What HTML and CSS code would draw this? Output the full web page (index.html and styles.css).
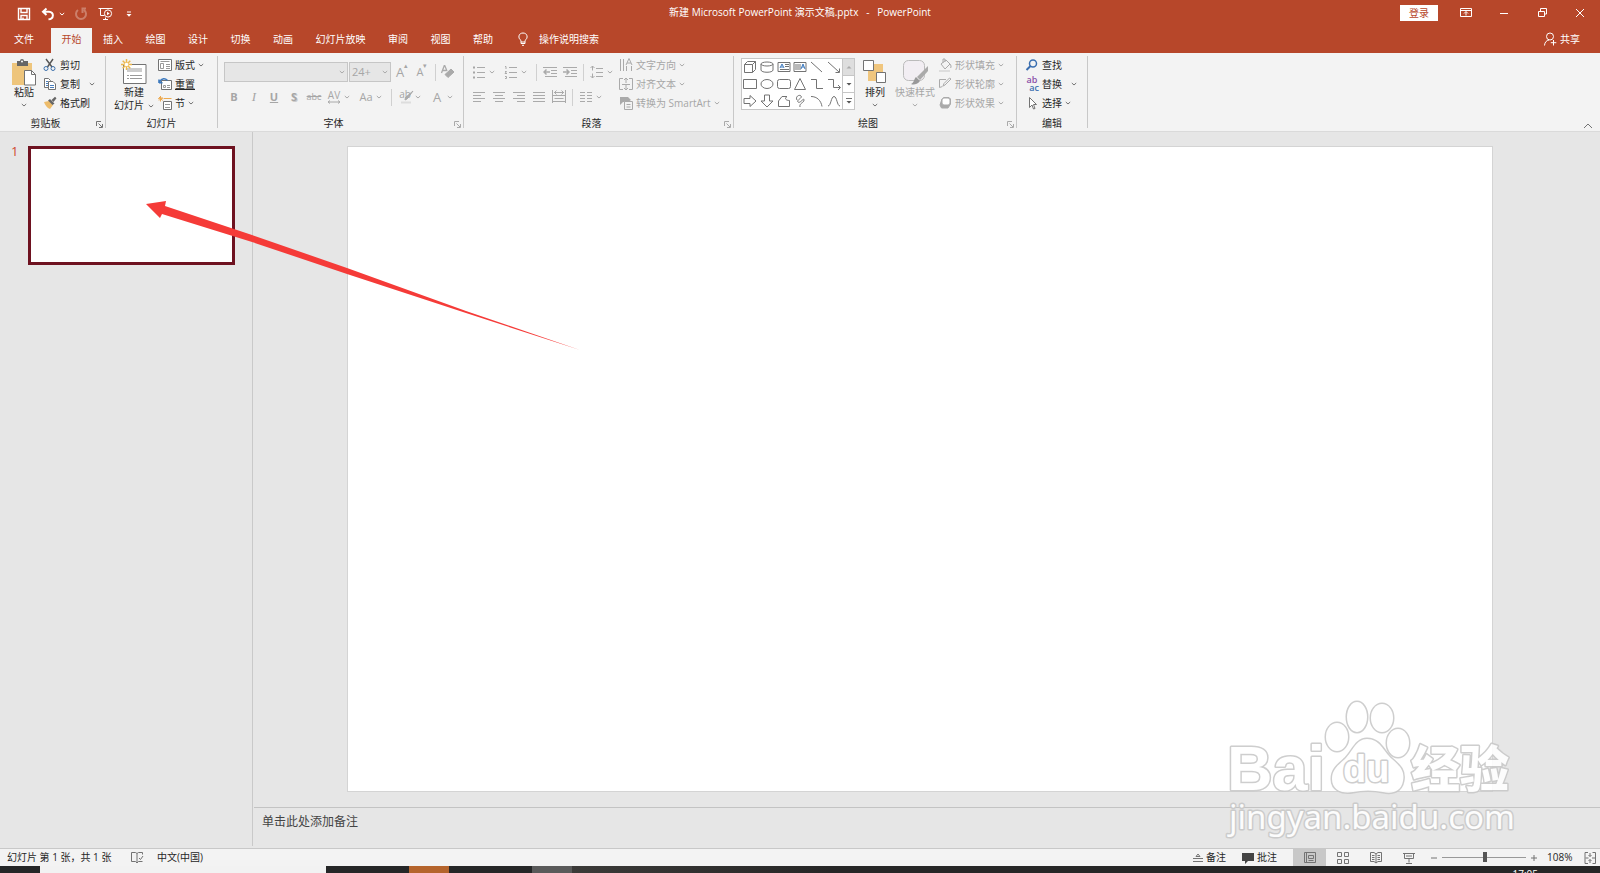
FILE: index.html
```html
<!DOCTYPE html>
<html lang="zh-CN">
<head>
<meta charset="utf-8">
<title>新建 Microsoft PowerPoint 演示文稿.pptx - PowerPoint</title>
<link rel="stylesheet" href="styles.css">
</head>
<body>
<svg class="defs" aria-hidden="true">
  <symbol id="chev" viewBox="0 0 6 6"><path d="M.8 2l2.2 2 2.2-2"/></symbol>
  <symbol id="launch" viewBox="0 0 7 7"><path d="M.5 5V.5H5M2.5 2.5l3.5 3.5M6.500 3v3.500H3"/></symbol>
</svg>
<div class="app">
  <header class="titlebar">
    <div class="quick">
      <button class="tbtn save" aria-label="保存"><svg class="i14" viewBox="0 0 14 14"><path d="M1.500 1.500h11v11h-11zM4 1.500v4h6v-4M4 12.500V8.500h6v4M6 10.500v2" stroke-width="1.400"/></svg></button>
      <button class="tbtn" aria-label="撤消"><svg class="i14 bold" viewBox="0 0 14 14"><path d="M5.500 1.500L2 4.800l3.500 3.300M2.300 4.800h5.700c5.500 0 5 7.500-.5 7.500"/></svg></button>
      <button class="drop" aria-label="撤消选项"><svg class="chev"><use href="#chev"/></svg></button>
      <button class="tbtn faded" aria-label="恢复" disabled><svg class="i14 bold" viewBox="0 0 14 14"><path d="M4 3a5 5 0 1 0 6 0M7.500 1.500H12M8.500 1.500V6"/></svg></button>
      <button class="tbtn show" aria-label="从头开始"><svg class="i16" viewBox="0 0 16 16"><path d="M.5 2.500h14M2.500 2.500v7h4M5 13.500h5M7.500 11.500v2"/><circle cx="10" cy="7.500" r="3.600"/><path d="M9 5.800v3.400l2.700-1.700z" class="solid"/></svg></button>
      <button class="drop" aria-label="自定义快速访问工具栏"><svg class="chev" viewBox="0 0 6 6"><path d="M1 1h4"/><path d="M.5 3h5L3 5.800z" class="solid"/></svg></button>
    </div>
    <h1 class="doc-title">新建 Microsoft PowerPoint 演示文稿.pptx &nbsp;&nbsp;-&nbsp;&nbsp; PowerPoint</h1>
    <div class="window">
      <button class="login">登录</button>
      <button class="wbtn" aria-label="功能区显示选项"><svg class="i14" viewBox="0 0 14 14"><path d="M1.500 2.500h11v8h-11zM1.500 4.500h11M7 9.500V5.800M5 7.500l2-2 2 2"/></svg></button>
      <button class="wbtn" aria-label="最小化"><svg class="i14" viewBox="0 0 14 14"><path d="M3 7.500h8"/></svg></button>
      <button class="wbtn" aria-label="还原"><svg class="i14" viewBox="0 0 14 14"><path d="M3.500 5.500h6v5h-6zM5.500 5.500v-3h6v5.500h-2"/></svg></button>
      <button class="wbtn" aria-label="关闭"><svg class="i14" viewBox="0 0 14 14"><path d="M3 3l8 8M11 3l-8 8"/></svg></button>
    </div>
  </header>

  <nav class="tabs">
    <button class="tab file">文件</button>
    <button class="tab active">开始</button>
    <div class="tab-list">
      <button class="tab">插入</button><button class="tab">绘图</button><button class="tab">设计</button><button class="tab">切换</button><button class="tab">动画</button><button class="tab">幻灯片放映</button><button class="tab">审阅</button><button class="tab">视图</button><button class="tab">帮助</button>
    </div>
    <button class="tab tell"><svg class="i14" viewBox="0 0 14 14"><path d="M5 10V8.500C1.500 6 2.500 1 7 1s5.500 5 2 7.500V10zM5 10v1.500h4V10M6 13.300h2"/></svg>操作说明搜索</button>
    <button class="tab share"><svg class="i14" viewBox="0 0 14 14"><circle cx="7" cy="4.500" r="3.500"/><path d="M1.500 13.500c.3-3.500 2-5 4.500-5.500M10.500 8v5.500M7.800 10.700h5.500"/></svg>共享</button>
  </nav>

  <section class="ribbon" aria-label="开始">
    <div class="group clipboard">
      <div class="group-body">
        <button class="big"><svg class="i28" viewBox="0 0 28 28"><path d="M2 5h20v22H2z" fill="#eec57c" stroke="none"/><path d="M7 3h3a2 2 0 0 1 4 0h4v5H7z" fill="#666" stroke="none"/><circle cx="12" cy="3.500" r="1" fill="#fff" stroke="none"/><path d="M14.500 12.500h7l4 4v10.500h-11z" fill="#fff"/><path d="M21.500 12.500v4h4"/></svg><span>粘贴</span><svg class="chev"><use href="#chev"/></svg></button>
        <div class="col">
          <button class="cmd"><svg class="i14" viewBox="0 0 14 14"><path d="M3 1l6 8M10 1L4.500 9" stroke="#555" stroke-width="1.400"/><circle cx="3" cy="10.500" r="2" stroke="#3f72ad"/><circle cx="10" cy="10.500" r="2" stroke="#3f72ad"/></svg>剪切</button>
          <button class="cmd"><svg class="i14" viewBox="0 0 14 14"><path d="M1.500 1.500h4l2 2v7h-6z" fill="#fff"/><path d="M5.500 4.500h4.500l2.500 2.500v5.500h-7z" fill="#fff"/><path d="M3 4.500h2M3 6.500h2M3 8.500h2M7 8.500h4M7 10.500h4" stroke="#4a7ebb"/></svg>复制<svg class="chev far"><use href="#chev"/></svg></button>
          <button class="cmd"><svg class="i14" viewBox="0 0 14 14"><path d="M1 6l5-1 4 4-3 4C4 12 2 9 1 6z" fill="#edbc6b" stroke="none"/><path d="M5 4.500l2-1.500 4.500 4.500-2 1.500zM8.500 4L12 .8l1.500 1.500L10.500 6z" fill="#666" stroke="none"/></svg>格式刷</button>
        </div>
      </div>
      <div class="label">剪贴板</div>
      <button class="launcher" aria-label="剪贴板设置"><svg><use href="#launch"/></svg></button>
    </div>

    <div class="group slides">
      <div class="group-body">
        <button class="big"><svg class="i28" viewBox="0 0 28 28"><path d="M3.500 6.500h22.500v19H3.500z" fill="#fff"/><path d="M7 10h15v4H7z" fill="#ccc" stroke="none"/><path d="M7 17.500h2M10 17.500h12M7 20.500h2M10 20.500h12" stroke="#999"/><path d="M6.500 1v11M1 6.500h11M2.700 2.700l7.600 7.600M10.300 2.700l-7.600 7.600" stroke="#edb84e" stroke-width="1.500"/><circle cx="6.500" cy="6.500" r="1.800" fill="#fff" stroke="none"/></svg><span>新建</span><span class="with-chev">幻灯片<svg class="chev"><use href="#chev"/></svg></span></button>
        <div class="col">
          <button class="cmd"><svg class="i14" viewBox="0 0 14 14"><path d="M.5 1.500h13v11H.5z" fill="#fff"/><path d="M2.500 3.500h9M2.500 5.500h3v5h-3zM8 6.500h4M8 8.500h4M8 10.500h4" stroke="#999"/></svg>版式<svg class="chev"><use href="#chev"/></svg></button>
          <button class="cmd under"><svg class="i14" viewBox="0 0 14 14"><path d="M3.500 3.500h10v9h-10z" fill="#fff"/><path d="M5.500 8.500h2v2h-2zM9 8.500h3M9 10.500h3" stroke="#999"/><path d="M1 6V2.500M1 5.800h3.500M1.500 5C4 1 7 1 9.500 3.500" stroke="#3b78bd" stroke-width="1.600"/></svg>重置</button>
          <button class="cmd"><svg class="i14" viewBox="0 0 14 14"><path d="M5.500 5.500h8v8h-8z" fill="#fff"/><path d="M7 8.500h5M7 11.500h5" stroke="#999"/><path d="M6 2.500h7.500M2.500 0v5.500M0 2.700h5.500M1 1l3.500 3.500M4.500 1L1 4.500" stroke="#eda94e"/></svg>节<svg class="chev"><use href="#chev"/></svg></button>
        </div>
      </div>
      <div class="label">幻灯片</div>
    </div>

    <div class="group font off">
      <div class="group-body tools">
        <div class="row">
          <span class="combo name"><select aria-label="字体" disabled><option></option></select><svg class="chev"><use href="#chev"/></svg></span>
          <span class="combo size"><select aria-label="字号" disabled><option>24+</option></select><svg class="chev"><use href="#chev"/></svg></span>
          <button class="tool large" disabled>A<sup>▴</sup></button>
          <button class="tool" disabled>A<sup>▾</sup></button>
          <i class="sep"></i>
          <button class="tool eraser" aria-label="清除所有格式" disabled><svg class="i14" viewBox="0 0 14 14"><path d="M1.500 8L4.500 0l2.500 6M2.500 5.500h4" stroke-width="1.300"/><path d="M5 9.500L11 4l3 3L8 12.500z" fill="#aaa"/></svg></button>
        </div>
        <div class="row">
          <button class="tool" disabled><b>B</b></button>
          <button class="tool serif" disabled><em>I</em></button>
          <button class="tool" disabled><b><u>U</u></b></button>
          <button class="tool shadow" disabled><b>S</b></button>
          <button class="tool tiny" disabled><s>abc</s></button>
          <button class="tool kern" disabled>AV<svg viewBox="0 0 14 4"><path d="M1 2h12M3 .5L1 2l2 1.500M11 .5L13 2l-2 1.500"/></svg></button>
          <button class="drop" aria-label="字符间距" disabled><svg class="chev"><use href="#chev"/></svg></button>
          <button class="tool" disabled>Aa</button>
          <button class="drop" aria-label="更改大小写" disabled><svg class="chev"><use href="#chev"/></svg></button>
          <i class="sep"></i>
          <button class="tool kern mark-pen" disabled>ab<svg class="pen" viewBox="0 0 14 14"><path d="M13 1L7 9l-2 1 .5-2.500z" fill="#aaa"/><path d="M1 12.500h10" stroke="#ddd" stroke-width="2"/></svg></button>
          <button class="drop" aria-label="突出显示颜色" disabled><svg class="chev"><use href="#chev"/></svg></button>
          <button class="tool large" disabled>A</button>
          <button class="drop" aria-label="字体颜色" disabled><svg class="chev"><use href="#chev"/></svg></button>
        </div>
      </div>
      <div class="label">字体</div>
      <button class="launcher" aria-label="字体设置"><svg><use href="#launch"/></svg></button>
    </div>

    <div class="group para off">
      <div class="group-body">
        <div class="tools">
          <div class="row">
            <button class="tool" aria-label="项目符号" disabled><svg class="i14" viewBox="0 0 14 14"><path d="M5 2.500h8M5 7.500h8M5 12.500h8"/><path d="M1 1.500h2v2H1zM1 6.500h2v2H1zM1 11.500h2v2H1z" class="solid"/></svg></button>
            <button class="drop" aria-label="项目符号库" disabled><svg class="chev"><use href="#chev"/></svg></button>
            <button class="tool" aria-label="编号" disabled><svg class="i14" viewBox="0 0 14 14"><path d="M5 2.500h8M5 7.500h8M5 12.500h8M1 1.500h1v2.500M1 6.500h1.500l-1.500 2h2M1 11.500h1.500v2H1"/></svg></button>
            <button class="drop" aria-label="编号库" disabled><svg class="chev"><use href="#chev"/></svg></button>
            <i class="sep"></i>
            <button class="tool" aria-label="降低列表级别" disabled><svg class="i14" viewBox="0 0 14 14"><path d="M0 2.500h14M8 5.500h6M8 8.500h6M2 11.500h12"/><path d="M7 7H1.500M3.500 4.500L1 7l2.500 2.500" stroke-width="1.500"/></svg></button>
            <button class="tool" aria-label="提高列表级别" disabled><svg class="i14" viewBox="0 0 14 14"><path d="M0 2.500h14M8 5.500h6M8 8.500h6M2 11.500h12"/><path d="M0 7h5.500M3.500 4.500L6 7 3.500 9.500" stroke-width="1.500"/></svg></button>
            <i class="sep"></i>
            <button class="tool" aria-label="行距" disabled><svg class="i14" viewBox="0 0 14 14"><path d="M6 3.500h7M6 7.500h7M6 11.500h7M2.500 1v4.500M.5 3l2-2 2 2M2.500 8.500V13M.5 11l2 2 2-2"/></svg></button>
            <button class="drop" aria-label="行距选项" disabled><svg class="chev"><use href="#chev"/></svg></button>
          </div>
          <div class="row">
            <button class="tool" aria-label="左对齐" disabled><svg class="i14" viewBox="0 0 14 14"><path d="M1 2.500h12M1 5.500h8M1 8.500h12M1 11.500h8"/></svg></button>
            <button class="tool" aria-label="居中" disabled><svg class="i14" viewBox="0 0 14 14"><path d="M1 2.500h12M3 5.500h8M1 8.500h12M3 11.500h8"/></svg></button>
            <button class="tool" aria-label="右对齐" disabled><svg class="i14" viewBox="0 0 14 14"><path d="M1 2.500h12M5 5.500h8M1 8.500h12M5 11.500h8"/></svg></button>
            <button class="tool" aria-label="两端对齐" disabled><svg class="i14" viewBox="0 0 14 14"><path d="M1 2.500h12M1 5.500h12M1 8.500h12M1 11.500h12"/></svg></button>
            <button class="tool" aria-label="分散对齐" disabled><svg class="i14" viewBox="0 0 14 14"><path d="M.5 0v13M13.500 0v13M.5 5.500h13M2.500 8.500h9M.5 11.500h13M2 2.500h10M4.500 .5L2.500 2.500l2 2M9.500 .5l2 2-2 2"/></svg></button>
            <i class="sep"></i>
            <button class="tool" aria-label="分栏" disabled><svg class="i14" viewBox="0 0 14 14"><path d="M1 2.500h5M8 2.500h5M1 5.500h5M8 5.500h5M1 8.500h5M8 8.500h5M1 11.500h5M8 11.500h5"/></svg></button>
            <button class="drop" aria-label="分栏选项" disabled><svg class="chev"><use href="#chev"/></svg></button>
          </div>
        </div>
        <div class="col">
          <button class="cmd" disabled><svg class="i14" viewBox="0 0 14 14"><path d="M1.500 1v12M4.500 1v12M7.500 8v5M12.500 8v5M7 7l3-6.500L13 7M8 5h4"/></svg>文字方向<svg class="chev"><use href="#chev"/></svg></button>
          <button class="cmd" disabled><svg class="i14" viewBox="0 0 14 14"><path d="M4 1.500H.5v11H4M10 1.500h3.500v11H10M7 1v5M5 3l2-2 2 2M7 8v5M5 11l2 2 2-2M3 7.500h8"/></svg>对齐文本<svg class="chev"><use href="#chev"/></svg></button>
          <button class="cmd" disabled><svg class="i14" viewBox="0 0 14 14"><path d="M1 1h8l3 3-3 2H4L1 9z" fill="#aaa" stroke="none"/><path d="M5.500 5.500h8v8h-8zM7.500 8.500h4M7.500 11h4" fill="#f3f3f3"/></svg>转换为 SmartArt<svg class="chev"><use href="#chev"/></svg></button>
        </div>
      </div>
      <div class="label">段落</div>
      <button class="launcher" aria-label="段落设置"><svg><use href="#launch"/></svg></button>
    </div>

    <div class="group draw">
      <div class="group-body">
        <div class="gallery">
          <div class="shapes">
            <button aria-label="立方体"><svg class="i14" viewBox="0 0 14 14"><path d="M1.500 4.500h8v8h-8zM1.500 4.500l3-3h8l-3 3M12.500 1.500v8l-3 3"/></svg></button>
            <button aria-label="圆柱"><svg class="i14" viewBox="0 0 14 14"><ellipse cx="7" cy="4" rx="6" ry="2"/><path d="M1 4v6c0 3 12 3 12 0V4"/></svg></button>
            <button aria-label="文本框"><svg class="i14" viewBox="0 0 14 14"><path d="M1 2.500h12v9H1zM8 4.500h4M8 6.500h4M3 9.500h9"/><path d="M3 8l2-4 2 4M4 7h2" stroke="#3b78bd"/></svg></button>
            <button aria-label="竖排文本框"><svg class="i14" viewBox="0 0 14 14"><path d="M1 2.500h12v9H1zM3 4v6M5 4v6M7 4v6"/><path d="M8 9l2-5 2 5M9 7h2" stroke="#3b78bd"/></svg></button>
            <button aria-label="直线"><svg class="i14" viewBox="0 0 14 14"><path d="M1 2l11 10"/></svg></button>
            <button aria-label="箭头"><svg class="i14" viewBox="0 0 14 14"><path d="M1 2l11 10M12.500 8.500V12.500H8.500"/></svg></button>
            <button aria-label="矩形"><svg class="i14" viewBox="0 0 14 14"><path d="M.5 2.500h13v9H.5z"/></svg></button>
            <button aria-label="椭圆"><svg class="i14" viewBox="0 0 14 14"><ellipse cx="7" cy="7" rx="6" ry="4.500"/></svg></button>
            <button aria-label="圆角矩形"><svg class="i14" viewBox="0 0 14 14"><rect x=".5" y="2.500" width="13" height="9" rx="2"/></svg></button>
            <button aria-label="三角形"><svg class="i14" viewBox="0 0 14 14"><path d="M7 1.500l5.500 11h-11z"/></svg></button>
            <button aria-label="肘形连接符"><svg class="i14" viewBox="0 0 14 14"><path d="M1 2.500h5.500v9H13"/></svg></button>
            <button aria-label="肘形箭头"><svg class="i14" viewBox="0 0 14 14"><path d="M1 2.500h5.500v8H13M11 8l2.500 2.500L11 13"/></svg></button>
            <button aria-label="右箭头"><svg class="i14" viewBox="0 0 14 14"><path d="M1 4.500h6v-3l6 5.500-6 5.500v-3H1z"/></svg></button>
            <button aria-label="下箭头"><svg class="i14" viewBox="0 0 14 14"><path d="M4.500 1h5v6h3.500l-6 6-6-6h3.500z"/></svg></button>
            <button aria-label="任意多边形"><svg class="i14" viewBox="0 0 14 14"><path d="M1.500 12.500V7L5 2.500h5c-3 2-1 4 2.500 4v6z"/></svg></button>
            <button aria-label="自由曲线"><svg class="i14" viewBox="0 0 14 14"><path d="M4 6C2 3 6 0 8 2s-5 4-3 6 6-5 6-2-5 3-4 7"/></svg></button>
            <button aria-label="弧形"><svg class="i14" viewBox="0 0 14 14"><path d="M1 2.500c6 0 10 4 11 10"/></svg></button>
            <button aria-label="曲线"><svg class="i14" viewBox="0 0 14 14"><path d="M1 12C4 12 4 2.500 7 2.500S10 12 13 12"/></svg></button>
          </div>
          <div class="scroller">
            <button class="dim" aria-label="上一行"><svg class="chev" viewBox="0 0 6 6"><path d="M.5 4.500h5L3 2z" class="solid"/></svg></button>
            <button aria-label="下一行"><svg class="chev" viewBox="0 0 6 6"><path d="M.5 2h5L3 4.500z" class="solid"/></svg></button>
            <button aria-label="其他"><svg class="chev" viewBox="0 0 6 6"><path d="M0 .5h6"/><path d="M.5 3h5L3 5.500z" class="solid"/></svg></button>
          </div>
        </div>
        <button class="big arrange"><svg class="i28" viewBox="0 0 28 28"><path d="M7 6h15v17H7z" fill="#f0c67e" stroke="none"/><path d="M2.500 2.500h10v10h-10zM15.500 14.500h9v10h-9z" fill="#fff"/></svg><span>排列</span><svg class="chev"><use href="#chev"/></svg></button>
        <button class="big quickstyle" disabled><svg class="i28" viewBox="0 0 28 28"><rect x="2.500" y="2.500" width="21" height="20" rx="5" fill="#f2eef3" stroke="#bbb"/><path d="M27 8v5l-8 9-3-3z" fill="#aaa" stroke="none"/><path d="M15 19l4 4c-3 4-7 4-9 3 3-1 3-5 5-7z" fill="#999" stroke="none"/></svg><span>快速样式</span><svg class="chev"><use href="#chev"/></svg></button>
        <div class="col off">
          <button class="cmd" disabled><svg class="i14" viewBox="0 0 14 14"><path d="M3 6l5-4 4 4-5 5zM5 5V1h2v3M12 6c1 1 1.500 3 .5 4"/><path d="M1 13h11" stroke="#ddd" stroke-width="2"/></svg>形状填充<svg class="chev"><use href="#chev"/></svg></button>
          <button class="cmd" disabled><svg class="i14" viewBox="0 0 14 14"><path d="M8 2.500H1.500v8l3-1M13 2L7 8l-2 1 1-2.500L11.500 1z"/></svg>形状轮廓<svg class="chev"><use href="#chev"/></svg></button>
          <button class="cmd" disabled><svg class="i14" viewBox="0 0 14 14"><path d="M2 9l2-6 2-1.500h5L12.500 3v5L10 12H3.500z" fill="#aaa"/><rect x="4" y="2" width="8" height="7" rx="2" fill="#fff"/></svg>形状效果<svg class="chev"><use href="#chev"/></svg></button>
        </div>
      </div>
      <div class="label">绘图</div>
      <button class="launcher pale" aria-label="绘图设置"><svg><use href="#launch"/></svg></button>
    </div>

    <div class="group edit">
      <div class="group-body">
        <div class="col">
          <button class="cmd"><svg class="i14" viewBox="0 0 14 14"><circle cx="8" cy="5.500" r="3.500" stroke="#3b6fb0" stroke-width="1.500"/><path d="M5.500 8L1.500 12" stroke="#3b6fb0" stroke-width="2"/></svg>查找</button>
          <button class="cmd"><span class="abac"><b>ab</b><b>ac</b></span>替换<svg class="chev far"><use href="#chev"/></svg></button>
          <button class="cmd"><svg class="i14" viewBox="0 0 14 14"><path d="M4.500 1.500v10l2.500-2.500 1.500 4 1.500-.5-1.500-4h3z" fill="#fff"/></svg>选择<svg class="chev"><use href="#chev"/></svg></button>
        </div>
      </div>
      <div class="label">编辑</div>
    </div>
    <button class="collapse" aria-label="折叠功能区"><svg viewBox="0 0 10 6"><path d="M1 5l4-4 4 4"/></svg></button>
  </section>

  <main class="work">
    <aside class="thumbs">
      <span class="num">1</span>
      <button class="thumb" aria-label="幻灯片 1"></button>
    </aside>
    <section class="editor">
      <div class="stage"><div class="slide"></div></div>
      <div class="notes">单击此处添加备注</div>
    </section>
    <svg class="arrow" viewBox="0 0 434 150" aria-hidden="true"><path d="M0 4l20-3-1 5 87 29 95 33 119 43 114 39-114-37-119-39-95-32-90-28-2 4z"/></svg>
  </main>

  <footer class="status">
    <span class="count">幻灯片 第 1 张，共 1 张</span>
    <button class="sbtn" aria-label="拼写检查"><svg class="i14" viewBox="0 0 14 14"><path d="M7 12V2.500L5.500 1.500h-4v9h4L7 12l1.500-1.500h4M7 2.500l1.500-1h4v2M9 7l1.500 1.500L13 5"/></svg></button>
    <button class="sbtn lang">中文(中国)</button>
    <div class="right">
      <button class="sbtn"><svg class="i14" viewBox="0 0 14 14"><path d="M2 7.500h10M2 10.500h10M5 5.500h4L7 3z"/></svg>备注</button>
      <button class="sbtn comments"><svg class="i14" viewBox="0 0 14 14"><path d="M1 2h12v8H7l-3 3v-3H1z" fill="#444" stroke="none"/></svg>批注</button>
      <button class="view on" aria-label="普通视图"><svg class="i14" viewBox="0 0 14 14"><path d="M1.500 1.500h11v10h-11zM3.500 1.500v10M5.500 4.500h5v3h-5zM5.500 9.500h5"/></svg></button>
      <button class="view" aria-label="幻灯片浏览"><svg class="i14" viewBox="0 0 14 14"><path d="M1.500 1.500h4v4h-4zM8.500 1.500h4v4h-4zM1.500 8.500h4v4h-4zM8.500 8.500h4v4h-4z"/></svg></button>
      <button class="view" aria-label="阅读视图"><svg class="i14" viewBox="0 0 14 14"><path d="M7 3v9M1.500 1.500H5L7 3l2-1.500h3.500v9H9L7 12l-2-1.500H1.500zM3 4.500h2.500M3 6.500h2.500M3 8.500h2.500M8.500 4.500H11M8.500 6.500H11M8.500 8.500H11"/></svg></button>
      <button class="view" aria-label="幻灯片放映"><svg class="i14" viewBox="0 0 14 14"><path d="M1 2.500h12M2.500 2.500v5h9v-5M4 5h6M7 7.500v4M4 12.500h6"/></svg></button>
      <button class="zoomstep" aria-label="缩小"><svg viewBox="0 0 8 8"><path d="M1 4h6"/></svg></button>
      <input class="zoom" type="range" min="0" max="200" value="103" aria-label="缩放">
      <button class="zoomstep" aria-label="放大"><svg viewBox="0 0 8 8"><path d="M1 4h6M4 1v6"/></svg></button>
      <button class="sbtn percent">108%</button>
      <button class="sbtn fit" aria-label="适应窗口"><svg class="i14" viewBox="0 0 14 14"><path d="M5 1.500H2v11h3M9.500 1.500h3v11h-3M7 2v3.500M5.500 4L7 5.500 8.500 4M7 12V8.500M5.500 10L7 8.500l1.500 1.500M2.500 7h3M12 7H9"/></svg></button>
    </div>
  </footer>

  <div class="taskbar"><i class="field"></i><i class="orange"></i><i class="grey"></i><i class="rest"></i><time>17:05</time></div>

  <svg class="watermark" viewBox="0 0 290 140" aria-hidden="true">
    <g class="mark">
      <text class="bai" x="1" y="88">Bai</text>
      <ellipse cx="111" cy="35" rx="11" ry="14"/><ellipse cx="131" cy="15" rx="10" ry="15"/><ellipse cx="156" cy="16" rx="11" ry="14"/><ellipse cx="172" cy="41" rx="11" ry="14"/>
      <path d="M141 37c13 0 16 12 25 20 8 7 13 12 11 22-2 11-11 13-20 11-10-2-20-2-30 0-11 2-21-2-21-13 0-9 5-13 13-20 8-8 11-20 22-20z"/>
      <text class="du" x="117" y="80">du</text>
      <text class="jy" x="185" y="85">经验</text>
      <text class="url" x="3" y="127">jingyan.baidu.com</text>
    </g>
  </svg>
</div>
</body>
</html>
```
FILE: styles.css
```css
* { box-sizing: border-box; }
body {
  margin: 0;
  font: 10px/14px "Open Sans", "Noto Sans CJK SC", sans-serif;
  color: #262626;
  background: #e6e6e6;
}
button {
  margin: 0; padding: 0; border: 0; background: none;
  font: inherit; color: inherit; white-space: nowrap;
}
svg { flex: none; fill: none; stroke: #737373; stroke-width: 1; display: block; }
.solid { fill: currentColor; stroke: none; }
.defs { position: absolute; width: 0; height: 0; }
.i14 { width: 14px; height: 14px; }
.i16 { width: 16px; height: 16px; }
.i28 { width: 28px; height: 28px; }
.bold { stroke-width: 2; }
.chev { width: 6px; height: 6px; }

.app { position: relative; height: 100vh; display: flex; flex-direction: column; overflow: hidden; }

.titlebar, .tabs { background: #b7472a; color: #fff; }
.titlebar svg, .tabs svg { stroke: #fff; }
.titlebar .solid, .tabs .solid { stroke: none; }
.titlebar {
  height: 28px; display: grid; grid-template-columns: 1fr auto 1fr;
  align-items: center;
}
.quick { display: flex; align-items: center; padding-left: 17px; }
.tbtn { display: flex; width: 14px; }
.save { margin-right: 10px; }
.faded { opacity: .3; }
.quick .drop { width: 14px; padding-left: 4px; margin-right: 5px; }
.show { width: 16px; margin: 0 8px 0 10px; }
.doc-title { margin: 0; font-size: 10px; font-weight: 400; line-height: 14px; padding-bottom: 5px; }
.window { display: flex; align-items: center; justify-content: flex-end; padding: 0 1px 3px 0; }
.login { width: 38px; height: 16px; background: #fff; color: #b7472a; margin-right: 9px; line-height: 16px; }
.wbtn { width: 38px; display: flex; justify-content: center; }

.tabs { height: 25px; display: flex; align-items: stretch; }
.tab { line-height: 22px; padding-bottom: 3px; }
.file { padding-left: 14px; width: 51px; text-align: left; }
.active { width: 41px; background: #f3f3f3; color: #b7472a; }
.tab-list { display: flex; justify-content: space-between; width: 390px; margin-left: 11px; }
.tell { display: flex; align-items: center; gap: 9px; margin-left: 23px; }
.share { display: flex; align-items: center; gap: 3px; margin-left: auto; padding-right: 20px; }

.ribbon { position: relative; display: flex; background: #f3f3f3; padding: 3px 0; height: 78px; flex: none; }
.group { position: relative; border-right: 1px solid #c8c8c8; height: 72px; }
.clipboard { width: 106px; }
.slides { width: 112px; }
.font { width: 246px; }
.para { width: 270px; }
.draw { width: 283px; }
.edit { width: 71px; }
.group-body { height: 57px; display: flex; }
.label { height: 15px; line-height: 20px; text-align: center; }
.clipboard .label, .font .label, .para .label, .draw .label { padding-right: 14px; }
.launcher { position: absolute; right: 2px; bottom: 0; }
.launcher svg { width: 7px; height: 7px; }
.off svg, .pale svg { stroke: #aaa; }
.off { color: #262626; }
.off button, .quickstyle { color: #a6a6a6; }
.col { display: flex; flex-direction: column; }
.cmd { height: 19px; display: flex; align-items: center; gap: 3px; line-height: 18px; padding-bottom: 2px; }
.cmd .far { margin-left: 6px; }
.under { text-decoration: underline; }
.big { display: flex; flex-direction: column; align-items: center; line-height: 13px; padding-top: 2px; }
.big > .chev { margin-top: 3px; }
.clipboard .big { width: 38px; margin: 0 0 0 5px; }
.slides .big { width: 42px; margin-left: 7px; }
.slides .col { margin-left: 3px; }
.with-chev { display: flex; align-items: center; gap: 4px; }
.arrange { width: 38px; }
.quickstyle { width: 42px; }
.quickstyle svg { stroke: #aaa; }
.draw .col { margin-left: 2px; }
.edit .col { margin-left: 8px; }

.tools { display: flex; flex-direction: column; gap: 5px; padding-top: 6px; }
.font .tools { padding-left: 6px; }
.para .tools { width: 155px; padding-left: 5px; }
.row { display: flex; height: 20px; align-items: center; }
.tool { width: 20px; height: 20px; display: flex; align-items: center; justify-content: center; font-size: 11px; }
.large { font-size: 13px; }
.tool sup { font-size: 7px; line-height: 7px; align-self: flex-start; }
.eraser { width: 16px; }
.serif { font-family: "Liberation Serif", serif; font-size: 13px; }
.shadow { text-shadow: 1px 1px #ccc; }
.tiny { font-size: 9px; }
.kern { position: relative; flex-direction: column; font-size: 10px; line-height: 10px; }
.mark-pen { justify-content: flex-start; padding-top: 2px; }
.kern svg { width: 14px; height: 4px; }
.kern .pen { position: absolute; left: 5px; top: 3px; width: 14px; height: 14px; }
.drop { width: 12px; height: 20px; display: flex; align-items: center; }
.sep { width: 1px; height: 17px; margin: 0 3px; background: #d0d0d0; }
.combo { position: relative; height: 20px; margin-right: 1px; }
.combo select {
  appearance: none; width: 100%; height: 20px; border: 1px solid #c6c6c6; border-radius: 0;
  background: #e6e6e6; color: #a6a6a6; opacity: 1; padding: 0 2px; font: inherit; font-size: 11px;
}
.combo .chev { position: absolute; right: 3px; top: 7px; }
.name { width: 124px; }
.size { width: 42px; }

.gallery { display: flex; width: 114px; height: 52px; margin: 2px 1px 0 7px; border: 1px solid #c6c6c6; background: #fff; }
.shapes { display: grid; grid-template-columns: repeat(6, 1fr); flex: 1; }
.shapes button { display: grid; place-items: center; }
.scroller { width: 12px; display: grid; border-left: 1px solid #c6c6c6; }
.scroller button { display: grid; place-items: center; border-bottom: 1px solid #c6c6c6; color: #555; }
.scroller button:last-child { border-bottom: 0; }
.scroller .dim { background: #dedede; color: #aaa; }
.abac { width: 14px; font-size: 9px; line-height: 8px; color: #8a4fa8; display: flex; flex-direction: column; }
.abac b { font-weight: 600; }
.abac b + b { color: #3b6fb0; align-self: flex-end; }
.collapse { position: absolute; right: 7px; bottom: 2px; }
.collapse svg { width: 10px; height: 6px; }

.work { position: relative; flex: 1; min-height: 0; display: flex; border-top: 1px solid #dadada; }
.thumbs { width: 253px; display: flex; align-items: flex-start; padding: 14px 17px 0 11px; border-right: 1px solid #c9c9c9; margin: 0 0 2px; }
.num { width: 17px; font-size: 13px; line-height: 10px; color: #d04a30; }
.thumb { flex: 1; aspect-ratio: 207 / 119; background: #fff; border: 3px solid #6e1220; }
.editor { flex: 1; display: flex; flex-direction: column; }
.stage { flex: 1; padding: 14px 107px 15px 94px; display: flex; }
.slide { flex: 1; background: #fff; border: 1px solid #d4d4d4; }
.notes { height: 41px; margin-left: 1px; padding: 5px 8px; border-top: 1px solid #c3c3c3; font-size: 12px; line-height: 18px; color: #444; }
.arrow { position: absolute; left: 146px; top: 68px; width: 434px; height: 150px; fill: #f53b38; stroke: none; }

.status { height: 18px; flex: none; display: flex; align-items: center; background: #f3f3f3; border-top: 1px solid #c8c8c8; padding-left: 7px; line-height: 17px; }
.count { width: 123px; white-space: nowrap; }
.sbtn { display: flex; align-items: center; gap: 1px; }
.lang { margin-left: 13px; }
.right { margin-left: auto; display: flex; align-items: center; height: 17px; }
.comments { margin: 0 16px 0 15px; gap: 2px; }
.view { width: 33px; height: 17px; display: grid; place-items: center; }
.on { background: #c8c8c8; }
.zoomstep { width: 16px; display: grid; place-items: center; }
.zoomstep svg { width: 8px; height: 8px; }
.view + .zoomstep { margin-left: 1px; }
.zoom { appearance: none; width: 84px; height: 17px; margin: 0; background: none; }
.zoom::-webkit-slider-runnable-track { height: 1px; background: #999; }
.zoom::-webkit-slider-thumb { appearance: none; width: 4px; height: 10px; margin-top: -5px; background: #555; }
.percent { margin-left: 5px; width: 36px; }
.fit { margin-right: 3px; }

.taskbar { position: relative; height: 7px; flex: none; display: flex; background: #252627; padding-left: 40px; overflow: hidden; }
.field { width: 286px; background: #f2f2f2; }
.orange { width: 40px; margin-left: 83px; background: #b5642c; }
.grey { width: 40px; margin-left: 83px; background: #5a5a5a; }
.rest { flex: 1; background: linear-gradient(90deg, #3b3a38, #262626 25%); }
.taskbar time { position: absolute; right: 62px; top: 3px; color: #fff; font-size: 10px; line-height: 10px; }

.watermark { position: absolute; right: 84px; bottom: 31px; width: 290px; height: 140px; overflow: visible; }
.mark { fill: #fff; stroke: #c9c9c9; stroke-width: 3; stroke-linejoin: round; paint-order: stroke; opacity: .9; }
.bai { font: bold 63px "Liberation Sans", sans-serif; }
.du { font: bold 38px "Liberation Sans", sans-serif; }
.jy { font: 900 49px "Noto Sans CJK SC", sans-serif; }
.url { font: 33px "Noto Sans", sans-serif; }
```
